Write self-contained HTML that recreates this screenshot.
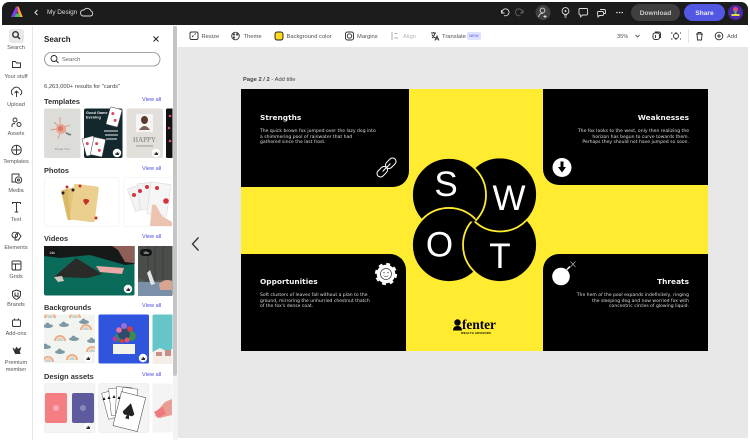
<!DOCTYPE html>
<html><head><meta charset="utf-8"><style>
html,body{margin:0;padding:0;width:750px;height:440px;overflow:hidden;background:#fff;font-family:"Liberation Sans",sans-serif}
.a{position:absolute}
.t{position:absolute;white-space:nowrap;line-height:1}
.rail{position:absolute;left:0;width:32px;text-align:center;font-size:5.6px;color:#555;line-height:7px}
.h{position:absolute;left:44px;font-size:7.4px;font-weight:bold;color:#333;line-height:1;white-space:nowrap}
.v{position:absolute;left:142px;font-size:5.6px;color:#4b4be0;line-height:1;white-space:nowrap}
.tb{position:absolute;top:34px;font-size:5.8px;color:#505050;line-height:7px;white-space:nowrap}
.ph{position:absolute;font-family:"DejaVu Sans",sans-serif;line-height:5.7px;font-size:4.55px;color:#ddd;white-space:nowrap}
.pt{position:absolute;font-family:"DejaVu Sans",sans-serif;font-weight:bold;font-size:7.4px;color:#f4f4f4;line-height:1;white-space:nowrap}
svg{position:absolute;overflow:visible}
</style></head><body>
<div class="a" style="left:2px;top:2px;width:746px;height:23px;background:#1c1c1c;border-radius:7px 7px 0 0"></div>
<svg style="left:0;top:0" width="750" height="440" viewBox="0 0 750 440" fill="none">
<path d="M11 17L16 6.5H18.5L23 17H19.5L17.3 11.5L14.5 17Z" fill="#e63b7a"/><path d="M11 17L16 6.5L17.5 10L14.5 17Z" fill="#7b3ff2"/><path d="M17.5 6.5H18.5L22.5 17H19.5Z" fill="#f2b21e"/><path d="M14.5 17L16 13.5H19L20 17Z" fill="#36c06b"/>
<path d="M37.5 10L35 12.5L37.5 15" stroke="#ddd" stroke-width="1.1"/>
<path d="M83 16H90.5A2.6 2.6 0 0 0 91 11A4 4 0 0 0 84 10A3 3 0 0 0 83 16Z" stroke="#ddd" stroke-width=".9"/>
<path d="M501.500 10V13H504.500M502 12.500A3.500 3.500 0 1 1 504 15.500" stroke="#ddd" stroke-width=".9"/>
<path d="M523 10V13H520M522.500 12.500A3.500 3.500 0 1 0 520.500 15.500" stroke="#666" stroke-width=".9"/>
<circle cx="543" cy="12.5" r="7.5" fill="#3f3f3f"/><circle cx="542.5" cy="10.5" r="2.4" stroke="#ddd" stroke-width=".9"/><path d="M538.5 17C539 14.5 541 13.2 543 13.2M545 15V18M543.5 16.5H546.5" stroke="#ddd" stroke-width=".9"/>
<circle cx="565.5" cy="11" r="3.4" stroke="#ddd" stroke-width=".9"/><path d="M564 15H567M564.5 17H566.5" stroke="#ddd" stroke-width=".9"/><circle cx="565.5" cy="11" r="1" fill="#ddd"/>
<path d="M580 8.5H586.5Q587.6 8.5 587.6 9.6V13.8Q587.6 15 586.5 15H582.5L580.6 16.8V15Q579 15 579 13.8V9.6Q579 8.5 580 8.5Z" stroke="#ddd" stroke-width=".9"/>
<path d="M600 9.5H604Q605.5 9.5 605.5 11V13.5H604M598.5 11.5H602.5Q603.6 11.5 603.6 12.6V14.4Q603.6 15.5 602.5 15.5H599.5L598 17V15.5Q597.5 15.5 597.5 14.4V12.6Q597.5 11.5 598.5 11.5Z" stroke="#ddd" stroke-width=".9"/>
<circle cx="617" cy="12.5" r=".8" fill="#ddd"/><circle cx="619.6" cy="12.5" r=".8" fill="#ddd"/><circle cx="622.2" cy="12.5" r=".8" fill="#ddd"/>
<rect x="631" y="4" width="49" height="17" rx="8.5" fill="#3f3f3f"/><rect x="684" y="4" width="41" height="17" rx="8.5" fill="#5258e4"/>
<circle cx="735.5" cy="12.5" r="7.5" fill="#4b2aa8"/><circle cx="735.5" cy="9.5" r="2.6" fill="#e0457b"/><rect x="734.5" y="10.5" width="2" height="4" fill="#3fc06a"/><rect x="731.5" y="14" width="8" height="2" fill="#e9d83a"/>
</svg>
<div class="t" style="left:47px;top:10px;font-size:6.4px;color:#ddd">My Design</div>
<div class="t" style="left:631px;width:49px;top:10.500px;text-align:center;font-size:6.6px;font-weight:bold;color:#ccc">Download</div>
<div class="t" style="left:684px;width:41px;top:10.500px;text-align:center;font-size:6.6px;font-weight:bold;color:#eee">Share</div>

<div class="a" style="left:32px;top:26px;width:1px;height:414px;background:#e8e8e8"></div>
<div class="a" style="left:9px;top:29px;width:15px;height:14px;background:#e8e8e8;border-radius:3px"></div>
<div class="rail" style="top:45px">Search</div>
<div class="rail" style="top:73.500px">Your stuff</div>
<div class="rail" style="top:102px">Upload</div>
<div class="rail" style="top:131px">Assets</div>
<div class="rail" style="top:159px">Templates</div>
<div class="rail" style="top:188px">Media</div>
<div class="rail" style="top:216.500px">Text</div>
<div class="rail" style="top:245px">Elements</div>
<div class="rail" style="top:273.500px">Grids</div>
<div class="rail" style="top:302px">Brands</div>
<div class="rail" style="top:331px">Add-ons</div>
<div class="rail" style="top:359.500px">Premium<br>member</div>
<svg style="left:0;top:0" width="33" height="440" viewBox="0 0 33 440" fill="none" stroke="#333" stroke-width=".95">
<circle cx="15.500" cy="34.500" r="2.800" stroke-width="1.400"/><path d="M17.600 36.700L20 39" stroke-width="1.500"/>
<path d="M12.500 61.500H15.500L16.500 63H20.500V67.500H12.500Z"/>
<path d="M13 95A3.500 3.500 0 0 1 13 89A4 4 0 0 1 20 89.500A3 3 0 0 1 20 95M16.500 97V91M14.500 93L16.500 91L18.500 93"/>
<circle cx="15" cy="120" r="2"/><path d="M12 127V125.500Q12 123.500 15 123.500"/><circle cx="19" cy="124.500" r="2"/>
<circle cx="16.500" cy="150" r="4.800"/><path d="M12.500 150H20.500M16.500 145.500V154"/>
<path d="M12 174H19V176M12 174V182H15.500"/><circle cx="18.500" cy="180" r="3.200"/><circle cx="18.500" cy="180" r="1"/>
<path d="M12.500 204V202.500H20.500V204M16.500 202.500V212M14.800 212H18.200"/>
<circle cx="14.800" cy="235" r="2.800"/><path d="M15.500 235L18 232.500L21 236L18.500 240H15Z"/>
<rect x="12" y="261" width="9" height="9" rx="1.200"/><path d="M12 264H21M15.500 264V270"/>
<path d="M12.500 291.500L16.500 290L20.500 291.500V295Q20 298 16.500 299.500Q13 298 12.500 295Z"/><path d="M15 292.500V297M15 295L18 297V292.500"/>
<rect x="12.500" y="320" width="8" height="6.500" rx="1"/><path d="M14.500 320V318.500M18.500 320V318.500"/>
<path d="M13 348L15 350.500L16.500 347.500L18 349.500L20.500 348L19.300 351.500L20 353.500H15.500Z" fill="#333"/>
</svg>

<div class="t" style="left:44px;top:35.500px;font-size:8px;font-weight:bold;color:#222">Search</div>
<svg style="left:0;top:0" width="180" height="70" viewBox="0 0 180 70" fill="none">
<path d="M153.500 36.500L158.500 41.500M158.500 36.500L153.500 41.500" stroke="#222" stroke-width="1"/>
<rect x="44.500" y="52.500" width="115.500" height="13.500" rx="6.700" fill="#fff" stroke="#888" stroke-width=".8"/>
<circle cx="54" cy="58.500" r="3" stroke="#222" stroke-width=".9"/><path d="M56.200 60.700L58.500 63" stroke="#222" stroke-width=".9"/>
</svg>
<div class="t" style="left:62px;top:57.500px;font-size:5.8px;color:#666">Search</div>
<div class="t" style="left:44px;top:84.500px;font-size:5.800px;color:#444">6,263,000+ results for "cards"</div>

<div class="h" style="top:98px">Templates</div><div class="v" style="top:98px">View all</div>
<div class="h" style="top:167px">Photos</div><div class="v" style="top:167px">View all</div>
<div class="h" style="top:235px">Videos</div><div class="v" style="top:235px">View all</div>
<div class="h" style="top:304px">Backgrounds</div><div class="v" style="top:304px">View all</div>
<div class="h" style="top:373px">Design assets</div><div class="v" style="top:373px">View all</div>

<svg style="left:0;top:0" width="172" height="440" viewBox="0 0 172 440">
<defs><clipPath id="cl"><rect x="33" y="100" width="139.500" height="340"/></clipPath>
<clipPath id="bg1"><rect x="44" y="314.500" width="51" height="49" rx="1.500"/></clipPath>
<g id="pm"><circle r="4.200" fill="#fff"/><path d="M-2.500 -1L-1 1.500L0 -1.500L1.500 .5L2.500 -1L1.800 2H-1.500Z" fill="#222"/></g>
<g id="card"><rect x="-6" y="-9" width="12" height="18" rx="1" fill="#fff" stroke="#444" stroke-width=".5"/></g>
<g id="rb"><path d="M-6 0A6 6 0 0 1 6 0H4.200A4.200 4.200 0 0 0 -4.200 0Z" fill="#eda98a"/><path d="M-4.200 0A4.200 4.200 0 0 1 4.200 0H2.600A2.600 2.600 0 0 0 -2.600 0Z" fill="#f2d9b5"/><path d="M-2.600 0A2.600 2.600 0 0 1 2.600 0Z" fill="#bcd4df"/></g>
<g id="cld"><ellipse rx="5" ry="2" fill="#7f98a5"/><circle cx="-.5" cy="-1.500" r="1.900" fill="#7f98a5"/></g>
</defs>
<g clip-path="url(#cl)">
<rect x="44" y="108.500" width="36.500" height="49.500" rx="2" fill="#dcddd8"/>
<path d="M54 122L60 128M69 135L63 130M60 117V124M70 125L64 127M51 130L57 129M58 139L60 133" stroke="#d8957a" stroke-width=".9"/><circle cx="61" cy="129" r="5" fill="#e8a592"/><circle cx="60.500" cy="128.500" r="2.600" fill="#d77c6a"/><path d="M66 133L71 135" stroke="#6b7f78" stroke-width="1.500"/>
<text x="62" y="150" font-size="3.500" fill="#888" text-anchor="middle" font-family="Liberation Serif,serif">Thank You</text>
<rect x="84" y="108.500" width="38.500" height="49.500" rx="2" fill="#12282c"/>
<g transform="translate(114 117) rotate(15)"><use href="#card"/><circle r="1.500" fill="#d8475a" cx="-2" cy="-3"/><circle r="1.500" fill="#d8475a" cx="2" cy="3"/></g>
<g transform="translate(90 146) rotate(-15)"><use href="#card"/><circle r="1.500" fill="#d8475a" cx="-2" cy="-3"/><circle r="1.500" fill="#d8475a" cx="2" cy="3"/></g>
<g transform="translate(98 147) rotate(12)"><use href="#card"/><circle r="1.500" fill="#d8475a" cx="-2" cy="-3"/><circle r="1.500" fill="#d8475a" cx="2" cy="3"/></g>
<text x="86" y="114" font-size="3.800" font-weight="bold" fill="#eee">Good Game</text><text x="86" y="118.500" font-size="3.800" font-weight="bold" fill="#eee">Evening</text>
<path d="M104 131H118M105 135H118M106 139H117" stroke="#e9e9e9" stroke-width="1"/>
<use href="#pm" x="117" y="153"/>
<rect x="126.500" y="108.500" width="36.500" height="49.500" rx="2" fill="#e3dfda"/>
<rect x="136" y="114" width="17" height="18" fill="#f6f5f3"/><ellipse cx="144.500" cy="120" rx="3.500" ry="4" fill="#5b3a2c"/><path d="M139 130Q144.500 122 150 130Z" fill="#7c6155"/>
<text x="144.500" y="142" font-size="7" fill="#7d7a72" text-anchor="middle" font-family="Liberation Serif,serif">HAPPY</text><path d="M136 146H153" stroke="#9d9a93" stroke-width="1"/>
<use href="#pm" x="156" y="153"/>
<rect x="166" y="108.500" width="10" height="49.500" rx="1.500" fill="#111"/><circle cx="170" cy="116" r="1.300" fill="#e0487f"/><circle cx="169" cy="128" r="1.300" fill="#e0487f"/><circle cx="170" cy="141" r="1.300" fill="#e0487f"/>

<rect x="44.500" y="177.500" width="74.500" height="49" rx="1.500" fill="#fff" stroke="#eee" stroke-width=".6"/>
<g transform="translate(73 203) rotate(-13)"><rect x="-9" y="-15" width="20" height="31" rx="2" fill="#dcb765"/></g>
<g transform="translate(78 203) rotate(-5)"><rect x="-9" y="-15" width="20" height="31" rx="2" fill="#e3c377"/></g>
<g transform="translate(84 202) rotate(7)"><rect x="-12" y="-17" width="25" height="36" rx="2" fill="#eacf8e"/><path d="M-1 -1L2 3L5 -1A2 2 0 0 0 2 -3A2 2 0 0 0 -1 -1Z" fill="#c72f2b"/></g>
<circle cx="63" cy="193" r="1.500" fill="#222"/><circle cx="67" cy="187" r="1.500" fill="#c72f2b"/><circle cx="73" cy="190" r="1.500" fill="#222"/><circle cx="80" cy="186" r="1.500" fill="#c72f2b"/><circle cx="96" cy="218" r="1.500" fill="#c72f2b"/>
<rect x="124" y="177.500" width="50" height="49" rx="1.500" fill="#fff" stroke="#eee" stroke-width=".6"/>
<g transform="translate(138 198) rotate(-20)"><rect x="-7" y="-12" width="14" height="24" fill="#f3f3f3" stroke="#ccc" stroke-width=".4"/></g>
<g transform="translate(146 196) rotate(-6)"><rect x="-7" y="-13" width="14" height="26" fill="#f3f3f3" stroke="#ccc" stroke-width=".4"/></g>
<g transform="translate(158 198) rotate(8)"><rect x="-9" y="-15" width="20" height="32" fill="#f6f6f6" stroke="#ccc" stroke-width=".4"/></g>
<circle cx="134" cy="195" r="2" fill="#d8323a"/><circle cx="140" cy="191" r="2" fill="#d8323a"/><circle cx="147" cy="187" r="2" fill="#d8323a"/><circle cx="157" cy="188" r="2" fill="#d8323a"/><circle cx="166" cy="201" r="2.800" fill="#d8323a"/>
<path d="M150 226L152 205Q156 203 158 209L162 216L172 222V226Z" fill="#ecc3ae"/>

<rect x="44" y="246" width="90.500" height="49.500" rx="2" fill="#0b6b5b"/>
<path d="M44 246H134.500V264L125 265L90 255L60 258L44 256Z" fill="#151a18"/>
<path d="M112 246H134V263L125 262L118 250Z" fill="#8d5f58"/>
<path d="M54 277L76 258L102 274L88 278Z" fill="#2a2b29"/><path d="M54 277L62 276L64 281L58 282Z" fill="#cfc8c0"/><path d="M96 266L124 268L122 274L100 272Z" fill="#e8a9a7"/>
<rect x="46" y="249" width="12" height="7" rx="3.500" fill="#141414"/><text x="52" y="254" font-size="3.500" fill="#fff" text-anchor="middle">14s</text>
<use href="#pm" x="128" y="289"/>
<rect x="138" y="246" width="36" height="49.500" rx="2" fill="#595c58"/><path d="M138 246H174V280H160L146 282L138 278Z" fill="#4a4d49"/><path d="M148 246V280M155 246V280M163 246V280" stroke="#3b3e3a"/><path d="M138 282H172V296H138Z" fill="#7a8fa8"/><path d="M147 273L150 270L155 284L151 285Z" fill="#dfe4e8"/><path d="M159 284Q165 278 172 281V290H160Z" fill="#d7a592"/>
<rect x="140" y="249" width="12" height="7" rx="3.500" fill="#141414"/><text x="146" y="254" font-size="3.500" fill="#fff" text-anchor="middle">18s</text>

<rect x="44" y="314.500" width="51" height="49" rx="1.500" fill="#f2f4ef"/>
<g clip-path="url(#bg1)">
<use href="#rb" x="50" y="318"/><use href="#rb" x="75" y="318"/><use href="#rb" x="60" y="341"/><use href="#rb" x="86" y="330"/><use href="#rb" x="48" y="362"/><use href="#rb" x="72" y="360"/><use href="#rb" x="92" y="352"/>
<use href="#cld" x="48" y="326"/><use href="#cld" x="64" y="325"/><use href="#cld" x="84" y="322"/><use href="#cld" x="46" y="347"/><use href="#cld" x="74" y="339"/><use href="#cld" x="92" y="341"/><use href="#cld" x="60" y="352"/>
</g>
<use href="#pm" x="88" y="358"/>
<rect x="98.500" y="314.500" width="50.500" height="49" rx="1.500" fill="#2f55df"/>
<path d="M113 344H135V354H113Z" fill="#f4f3ea"/>
<circle cx="118" cy="338" r="4" fill="#2b8a5e"/><circle cx="131" cy="336" r="5" fill="#3a8d4a"/><circle cx="124" cy="334" r="6" fill="#314a6c"/><circle cx="119" cy="330" r="2.800" fill="#e770a0"/><circle cx="130" cy="329" r="2.800" fill="#de3b3b"/><circle cx="124" cy="326" r="3" fill="#9a6fd8"/><circle cx="115" cy="339" r="2.500" fill="#b936a3"/><circle cx="127" cy="340" r="2.500" fill="#e94f70"/><circle cx="122" cy="341" r="2" fill="#de3b3b"/>
<use href="#pm" x="143" y="358"/>
<rect x="152.500" y="314.500" width="24" height="49" rx="1.500" fill="#66c5c9"/><path d="M152.500 352L160 348L168 352L176 346V364H152.500Z" fill="#f5ede6"/><path d="M156 352H162V356H156ZM165 350H171V356H165Z" fill="#c98d8a"/>

<rect x="44.500" y="383.500" width="50.500" height="49" rx="1.500" fill="#f4f4f4" stroke="#e8e8e8" stroke-width=".5"/>
<rect x="45" y="393" width="22" height="30" rx="2" fill="#f57e82"/><rect x="72" y="393" width="22" height="30" rx="2" fill="#5d5a9e"/><circle cx="56" cy="408" r="3" fill="#fab"/><circle cx="83" cy="408" r="3" fill="#8b88c0"/><use href="#pm" x="88" y="427"/>
<rect x="98.500" y="383.500" width="50.500" height="49" rx="1.500" fill="#f4f4f4" stroke="#e8e8e8" stroke-width=".5"/>
<g transform="translate(112 405) rotate(-15)"><rect x="-7" y="-14" width="15" height="27" fill="#fff" stroke="#333" stroke-width=".4"/></g>
<g transform="translate(117 402) rotate(-6)"><rect x="-7" y="-14" width="15" height="27" fill="#fff" stroke="#333" stroke-width=".4"/></g>
<g transform="translate(123 401) rotate(3)"><rect x="-7" y="-14" width="15" height="27" fill="#fff" stroke="#333" stroke-width=".4"/></g>
<g transform="translate(128 402) rotate(8)"><rect x="-7" y="-14" width="15" height="27" fill="#fff" stroke="#333" stroke-width=".4"/></g>
<g transform="translate(129 411) rotate(14)"><rect x="-12" y="-17" width="25" height="35" fill="#fff" stroke="#333" stroke-width=".5"/><path d="M0 -8L6 2Q4 6 1 4L2 8H-2L-1 4Q-4 6 -6 2Z" fill="#222"/></g>
<path d="M104 397l1.500 3h-3zM109 396l1.500 3h-3zM114 395l1.500 3h-3zM119 396l1.500 3h-3z" fill="#111"/>
<rect x="152.500" y="383.500" width="24" height="49" rx="1.500" fill="#f4f4f4"/><path d="M165 402L172 399V415L160 418L155 416L157 411Z" fill="#e89e93"/><path d="M154 412L163 407L166 414L158 418Z" fill="#f0787e"/>
</g>
</svg>

<div class="a" style="left:173px;top:26px;width:5px;height:414px;background:#f3f3f3"></div>
<div class="a" style="left:173px;top:26px;width:4px;height:350px;background:#c5c5c5;border-radius:2px"></div>
<div class="a" style="left:177px;top:26px;width:573px;height:21px;background:#fff"></div>
<div class="a" style="left:178px;top:47px;width:570px;height:391px;background:#e8e8e8"></div>

<div class="tb" style="left:201.500px">Resize</div>
<div class="tb" style="left:243.500px">Theme</div>
<div class="tb" style="left:286.500px">Background color</div>
<div class="tb" style="left:357px">Margins</div>
<div class="tb" style="left:403px;color:#b5b5b5">Align</div>
<div class="tb" style="left:442px">Translate</div>
<div class="a" style="left:467px;top:32px;width:14px;height:8px;background:#dfe2ff;border-radius:1.500px;text-align:center;font-size:4px;line-height:8px;color:#4b4be0">NEW</div>
<div class="tb" style="left:617px;font-size:5.600px">35%</div>
<div class="tb" style="left:727px;font-size:5.800px">Add</div>
<svg style="left:0;top:0" width="750" height="50" viewBox="0 0 750 50" fill="none" stroke="#333" stroke-width=".95">
<rect x="190" y="32" width="8" height="7.500" rx="1.500"/><path d="M192 37L193.500 35.500M194.500 34.500L196 33.500"/>
<circle cx="235.500" cy="36" r="3.800"/><circle cx="234" cy="34.500" r=".6" fill="#333"/><circle cx="237" cy="34.500" r=".6" fill="#333"/><circle cx="234" cy="37.500" r=".6" fill="#333"/>
<rect x="275" y="32" width="8" height="8" rx="2.200" fill="#fedb1c" stroke="#222"/>
<rect x="345.500" y="32" width="8" height="8" rx="2"/><circle cx="349.500" cy="36" r="2.200"/>
<path d="M392 32V40M394.500 33.500H397M394.500 38H398" stroke="#aaa"/>
<path d="M431 33H436M433.500 32V33M432 38Q434.500 36 435 33M432 34.500Q433.500 37.500 436 38M435 40.500L437 36L439 40.500M435.700 39H438.300"/>
<path d="M635.500 35L637.500 37L639.500 35" stroke="#555"/>
<rect x="653" y="33" width="6.500" height="6.500" rx="2"/><path d="M655 32H658.500Q660.500 32 660.500 34V38"/><path d="M655.500 35V38"/>
<circle cx="676" cy="36" r="2.500"/><path d="M671 33H672.500M671 39H672.500M680 33H681M680 39H681M676 32V33.500M676 38.500V40"/>
<path d="M688.500 29V43" stroke="#e5e5e5"/>
<path d="M696 34H703M697 34L697.500 40H701.500L702 34M698 34V32.500H701V34"/>
<circle cx="719" cy="36" r="3.800"/><path d="M717 36H721M719 34V38"/>
</svg>
<div class="t" style="left:243px;top:78px;font-size:5.800px;color:#444"><b>Page 2 / 2</b> - Add title</div>
<svg style="left:0;top:0" width="200" height="440" viewBox="0 0 200 440" fill="none"><path d="M198.500 237.500L192.500 244L198.500 250.500" stroke="#333" stroke-width="1.300"/></svg>

<div class="a" style="left:241px;top:88.500px;width:467px;height:262.500px;background:#ffeb2f"></div>
<div class="a" style="left:241px;top:88.500px;width:167.500px;height:98.500px;background:#000;border-bottom-right-radius:16px"></div>
<div class="a" style="left:543px;top:88.500px;width:165px;height:96.500px;background:#000;border-bottom-left-radius:16px"></div>
<div class="a" style="left:241px;top:254px;width:165px;height:97px;background:#000;border-top-right-radius:16px"></div>
<div class="a" style="left:543px;top:254px;width:165px;height:97px;background:#000;border-top-left-radius:16px"></div>

<div class="pt" style="left:260px;top:113.500px">Strengths</div>
<div class="ph" style="left:260px;top:129px">The quick brown fox jumped over the lazy dog into<br>a shimmering pool of rainwater that had<br>gathered since the last frost.</div>
<div class="pt" style="right:61px;top:113.500px;text-align:right">Weaknesses</div>
<div class="ph" style="right:61px;top:129px;text-align:right">The fox looks to the west, only then realizing the<br>horizon has begun to curve towards them.<br>Perhaps they should not have jumped so soon.</div>
<div class="pt" style="left:260px;top:277.500px">Opportunities</div>
<div class="ph" style="left:260px;top:293px">Soft clusters of leaves fall without a plan to the<br>ground, mirroring the unhurried chestnut thatch<br>of the fox's dense coat.</div>
<div class="pt" style="right:61px;top:277.500px;text-align:right">Threats</div>
<div class="ph" style="right:61px;top:293px;text-align:right">The hem of the pool expands indefinitely, ringing<br>the sleeping dog and now worried fox with<br>concentric circles of glowing liquid.</div>

<svg style="left:0;top:0" width="750" height="440" viewBox="0 0 750 440" fill="none">
<defs>
<clipPath id="sw"><rect x="455" y="150" width="60" height="71.500"/></clipPath>
<clipPath id="os"><rect x="420" y="200" width="55.500" height="21.500"/></clipPath>
</defs>
<g fill="#000" stroke="#ffeb2f" stroke-width="1.800">
<circle cx="449" cy="195" r="37"/>
<circle cx="449" cy="245" r="37"/>
<circle cx="500" cy="245" r="37"/>
<circle cx="500" cy="194.500" r="37"/>
<circle cx="449" cy="195" r="37" clip-path="url(#sw)"/>
<circle cx="449" cy="245" r="37" clip-path="url(#os)"/>
</g>
<g fill="#fff" font-family="Liberation Sans, sans-serif" font-size="35" text-anchor="middle">
<text x="446" y="196">S</text><text x="509" y="210">W</text><text x="439.500" y="256.500">O</text><text x="500" y="268">T</text>
</g>
<g stroke="#fff" stroke-width="1" transform="rotate(-45 386.500 167.500)">
<rect x="374.500" y="164" width="12" height="7" rx="3.500"/><rect x="386.500" y="164" width="12" height="7" rx="3.500"/><path d="M381 167.500H392"/>
</g>
<circle cx="562" cy="167.500" r="9.500" fill="#fff"/><path d="M560.500 161.500H563.500V167H566L562 172.500L558 167H560.500Z" fill="#000"/>
<circle cx="386" cy="274" r="9.300" fill="#fff"/><circle cx="386" cy="274" r="10" stroke="#fff" stroke-width="2.200" stroke-dasharray="3.900 3.950"/>
<circle cx="386" cy="274" r="5.500" stroke="#333" stroke-width=".7"/><circle cx="384" cy="272.700" r=".6" fill="#222"/><circle cx="388" cy="272.700" r=".6" fill="#222"/><path d="M383.500 275.500Q386 278 388.500 275.500" stroke="#222" stroke-width=".5"/>
<circle cx="561" cy="276.500" r="8.800" fill="#fff"/><path d="M567 269.500L570 266.500" stroke="#fff" stroke-width="1.500"/><path d="M570.500 261.500L575.500 267M575.500 261.500L570.500 267" stroke="#bbb" stroke-width=".6"/>
<circle cx="457.500" cy="322.500" r="3.200" fill="#000"/><path d="M453 330.500Q453 326 457.500 326Q462 326 462 330.500Z" fill="#000"/>
</svg>
<div class="t" style="left:462px;top:318px;font-family:'Liberation Serif',serif;font-weight:bold;font-size:13.300px;color:#000">fenter</div>
<div class="t" style="left:461px;top:331.500px;font-size:2.800px;font-weight:bold;color:#000;letter-spacing:.2px">WEALTH ADVISORS</div>
</body></html>
